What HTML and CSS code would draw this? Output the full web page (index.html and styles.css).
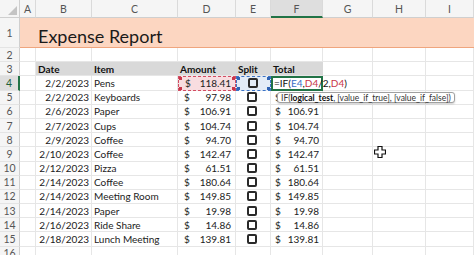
FILE: index.html
```html
<!DOCTYPE html>
<html lang="en">
<head>
    <meta charset="UTF-8">
    <title>Expense Report</title>
    <link rel="stylesheet" href="styles.css">
</head>
<body>
<div class="sheet" id="sheet">
    <div class="corner"><span class="tri"></span></div>
    <div class="col">A</div>
    <div class="col">B</div>
    <div class="col">C</div>
    <div class="col">D</div>
    <div class="col">E</div>
    <div class="col active">F</div>
    <div class="col">G</div>
    <div class="col">H</div>
    <div class="col">I</div>

    <div class="num">1</div>
    <div class="title">Expense Report</div>

    <div class="num">2</div>
    <div class="cell"></div><div class="cell"></div><div class="cell"></div><div class="cell"></div>
    <div class="cell"></div><div class="cell"></div><div class="cell"></div><div class="cell"></div><div class="cell"></div>

    <div class="num">3</div>
    <div class="cell"></div>
    <div class="cell hdr">Date</div>
    <div class="cell hdr">Item</div>
    <div class="cell hdr">Amount</div>
    <div class="cell hdr">Split</div>
    <div class="cell hdr">Total</div>
    <div class="cell"></div><div class="cell"></div><div class="cell"></div>

    <div class="num active">4</div>
    <div class="cell"></div>
    <div class="cell date">2/2/2023</div>
    <div class="cell">Pens</div>
    <div class="cell acct d ref-red"><span>$</span><span>118.41</span></div>
    <div class="cell chk ref-blue"><span class="box"></span></div>
    <div class="cell editing">=IF(<span class="caret"></span><span class="blue">E4</span>,<span class="red">D4</span>/2,<span class="red">D4</span>)</div>
    <div class="cell"></div><div class="cell"></div><div class="cell"></div>

    <div class="tip">IF(<b>logical_test</b>, [value_if_true], [value_if_false])</div>
    <svg class="pointer" width="12" height="12" viewBox="0 0 12 12">
        <path d="M4 0.5h4v3.5h3.5v4H8v3.5H4V8H0.5V4H4z" fill="#fff" stroke="#111" stroke-width="1.2"/>
    </svg>
</div>
<script>
    const expenses = [
        ["2/2/2023", "Keyboards", "97.98"],
        ["2/6/2023", "Paper", "106.91"],
        ["2/7/2023", "Cups", "104.74"],
        ["2/9/2023", "Coffee", "94.70"],
        ["2/10/2023", "Coffee", "142.47"],
        ["2/12/2023", "Pizza", "61.51"],
        ["2/14/2023", "Coffee", "180.64"],
        ["2/14/2023", "Meeting Room", "149.85"],
        ["2/14/2023", "Paper", "19.98"],
        ["2/16/2023", "Ride Share", "14.86"],
        ["2/18/2023", "Lunch Meeting", "139.81"]
    ];
    const sheet = document.getElementById("sheet");
    const empty = '<div class="cell"></div>';

    expenses.forEach((row, i) => {
        sheet.insertAdjacentHTML("beforeend",
            `<div class="num">${i + 5}</div>${empty}` +
            `<div class="cell date">${row[0]}</div>` +
            `<div class="cell">${row[1]}</div>` +
            `<div class="cell acct d"><span>$</span><span>${row[2]}</span></div>` +
            `<div class="cell chk"><span class="box"></span></div>` +
            `<div class="cell acct f"><span>$</span><span>${row[2]}</span></div>` +
            empty + empty + empty);
    });
    sheet.insertAdjacentHTML("beforeend", `<div class="num">16</div>` + empty.repeat(9));
</script>
</body>
</html>
```

FILE: styles.css
```css
body {
    margin: 0;
    font-family: Lato, "Liberation Sans", sans-serif;
    font-size: 10px;
    color: #222;
    background: #fff;
    overflow: hidden;
}
.sheet {
    position: relative;
    display: grid;
    grid-template-columns: 20px 16px 56px 86px 58px 35px 52px 50px 53px 48px;
    grid-template-rows: 18px 30px repeat(15, 14.2px);
    width: 474px;
    height: 255px;
    overflow: hidden;
}
.sheet > div {
    box-sizing: border-box;
}
.corner {
    background: #f5f5f5;
    border-right: 1px solid #cfcfcf;
    border-bottom: 1px solid #cfcfcf;
    display: flex;
    align-items: flex-end;
    justify-content: flex-end;
    padding: 0 2px 2px 0;
}
.tri {
    width: 0;
    height: 0;
    border-left: 9px solid transparent;
    border-bottom: 9px solid #c4c4c4;
}
.col {
    background: #f5f5f5;
    border-right: 1px solid #dadada;
    border-bottom: 1px solid #cfcfcf;
    display: flex;
    align-items: center;
    justify-content: center;
    color: #555;
    font-size: 10.5px;
    padding-top: 1px;
}
.col.active {
    background: #dedede;
    border-bottom: 2px solid #217346;
}
.num {
    background: #f5f5f5;
    border-right: 1px solid #cfcfcf;
    border-bottom: 1px solid #e4e4e4;
    display: flex;
    align-items: center;
    justify-content: center;
    color: #555;
    font-size: 10.5px;
}
.num.active {
    background: #dedede;
    color: #1f5f3a;
    border-right: 2px solid #217346;
}
.title {
    grid-column: 2 / -1;
    background: #fcd6c1;
    border-bottom: 1px solid #efa57e;
    display: flex;
    align-items: flex-end;
    padding: 0 0 2px 18px;
    font-size: 18px;
    line-height: 18px;
    color: #1a1a1a;
}
.cell {
    border-right: 1px solid #e6e6e6;
    border-bottom: 1px solid #e6e6e6;
    display: flex;
    align-items: center;
    padding: 0 2px;
    white-space: nowrap;
    overflow: visible;
}
.hdr {
    background: #d9d9d9;
    border-right-color: #d9d9d9;
    font-weight: bold;
    color: #111;
    padding-left: 2px;
}
.date {
    justify-content: flex-end;
}
.acct {
    justify-content: space-between;
}
.acct.d {
    padding: 0 4px 0 6px;
}
.acct.f {
    padding: 0 3px 0 4px;
}
.chk {
    justify-content: center;
    padding-left: 0;
}
.box {
    width: 10px;
    height: 10px;
    border: 2px solid #2a2a2a;
    border-radius: 2px;
    box-sizing: border-box;
}
.ref-red {
    border: 1.5px dashed #d24d63;
    background:
        linear-gradient(#c8364a, #c8364a) left top / 3px 3px no-repeat,
        linear-gradient(#c8364a, #c8364a) right top / 3px 3px no-repeat,
        linear-gradient(#c8364a, #c8364a) left bottom / 3px 3px no-repeat,
        linear-gradient(#c8364a, #c8364a) right bottom / 3px 3px no-repeat,
        #f8dde0;
    padding: 0 3px 0 5px;
}
.ref-blue {
    border: 1.5px dashed #3d74c6;
    background:
        linear-gradient(#2f63b5, #2f63b5) left top / 3px 3px no-repeat,
        linear-gradient(#2f63b5, #2f63b5) right top / 3px 3px no-repeat,
        linear-gradient(#2f63b5, #2f63b5) left bottom / 3px 3px no-repeat,
        linear-gradient(#2f63b5, #2f63b5) right bottom / 3px 3px no-repeat,
        #e3ecf7;
}
.editing {
    border: 2px solid #217346;
    padding-left: 1px;
    color: #111;
    position: relative;
    z-index: 1;
}
.caret {
    display: inline-block;
    width: 1px;
    height: 11px;
    background: #111;
}
.blue {
    color: #3b6fc5;
}
.red {
    color: #c8364a;
}
.tip {
    position: absolute;
    left: 277px;
    top: 92px;
    height: 11px;
    padding: 0 3px;
    border: 1px solid #a0a0a0;
    border-radius: 3px;
    background: #fff;
    box-shadow: 0 1px 2px rgba(0, 0, 0, 0.2);
    font-size: 8.5px;
    line-height: 11px;
    color: #333;
    white-space: nowrap;
    z-index: 2;
}
.tip b {
    color: #111;
}
.pointer {
    position: absolute;
    left: 374px;
    top: 146px;
}
```
